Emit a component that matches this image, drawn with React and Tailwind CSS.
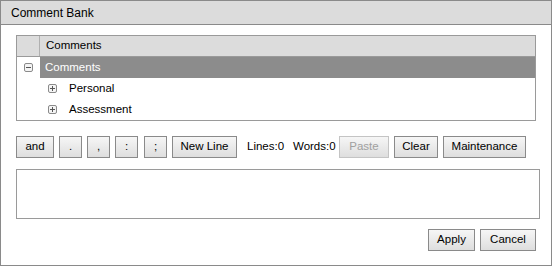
import React from 'react';

function Btn({ children, className = '', disabled = false }) {
  return (
    <button
      className={`h-[22px] border text-[11.5px] leading-none flex items-center justify-center bg-gradient-to-b from-[#f6f6f6] to-[#dedede] ${
        disabled ? 'border-[#c4c4c4] text-[#a0a0a0]' : 'border-[#8a8a8a] text-black'
      } ${className}`}
    >
      {children}
    </button>
  );
}

function Toggle({ open }) {
  return (
    <svg width="9" height="9" viewBox="0 0 9 9" className="shrink-0">
      <rect x="0.5" y="0.5" width="8" height="8" rx="1.5" fill="#f4f4f4" stroke="#8a8a8a" />
      <line x1="2" y1="4.5" x2="7" y2="4.5" stroke="#555" />
      {!open && <line x1="4.5" y1="2" x2="4.5" y2="7" stroke="#555" />}
    </svg>
  );
}

export default function App() {
  return (
    <div
      className="w-[552px] h-[266px] border border-[#8a8a8a] bg-white flex flex-col text-black"
      style={{ fontFamily: '"Liberation Sans", Arial, sans-serif' }}
    >
      <div className="h-[24px] shrink-0 bg-[#dcdcdc] border-b border-[#8a8a8a] flex items-center pl-[10px] text-[12px]">
        Comment Bank
      </div>

      <div className="px-[15px] flex flex-col">
        {/* tree */}
        <div className="mt-[10px] w-[520px] border border-[#9a9a9a] text-[11.5px]">
          <div className="flex h-[21px] bg-[#dcdcdc] border-b border-[#9a9a9a]">
            <div className="w-[23px] border-r border-[#b0b0b0]" />
            <div className="flex items-center pl-[6px]">Comments</div>
          </div>
          <div className="flex h-[21px]">
            <div className="w-[23px] flex items-center justify-center">
              <Toggle open />
            </div>
            <div className="flex-1 bg-[#8c8c8c] text-white flex items-center pl-[5px]">Comments</div>
          </div>
          <div className="flex h-[21px] items-center pl-[31px]">
            <Toggle />
            <span className="ml-[12px]">Personal</span>
          </div>
          <div className="flex h-[21px] items-center pl-[31px]">
            <Toggle />
            <span className="ml-[12px]">Assessment</span>
          </div>
        </div>

        {/* toolbar */}
        <div className="mt-[15px] flex items-center text-[11.5px]">
          <Btn className="w-[38px]">and</Btn>
          <Btn className="w-[23px] ml-[5px]">.</Btn>
          <Btn className="w-[23px] ml-[5px]">,</Btn>
          <Btn className="w-[23px] ml-[5px]">:</Btn>
          <Btn className="w-[23px] ml-[6px]">;</Btn>
          <Btn className="w-[65px] ml-[5px]">New Line</Btn>
          <span className="ml-[10px] w-[46px]">Lines:0</span>
          <span className="w-[46px]">Words:0</span>
          <Btn disabled className="w-[50px]">Paste</Btn>
          <Btn className="w-[44px] ml-[5px]">Clear</Btn>
          <Btn className="w-[83px] ml-[5px]">Maintenance</Btn>
        </div>

        <div className="mt-[11px] w-[524px] h-[50px] border border-[#9a9a9a]" />

        <div className="mt-[10px] flex justify-end pr-[1px] w-[521px]">
          <Btn className="w-[47px] h-[21px]">Apply</Btn>
          <Btn className="w-[56px] h-[21px] ml-[5px]">Cancel</Btn>
        </div>
      </div>
    </div>
  );
}
